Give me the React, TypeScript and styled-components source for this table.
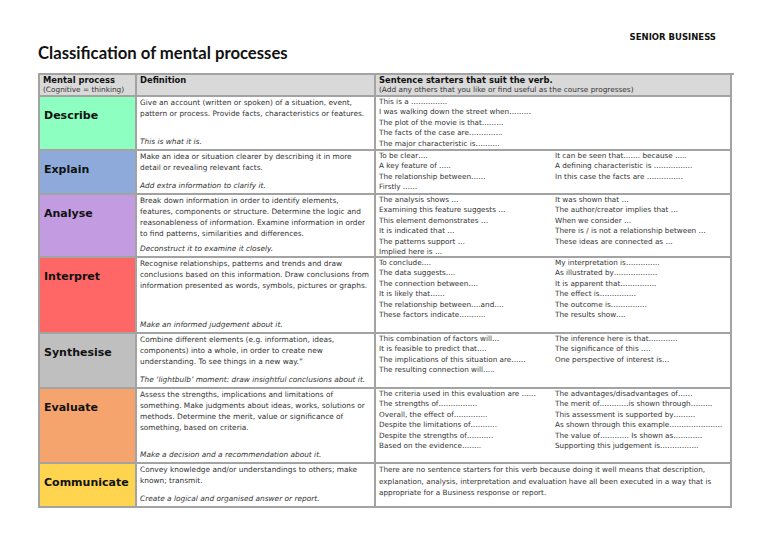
import React from "react";
import styled, { createGlobalStyle } from "styled-components";

const Global = createGlobalStyle`
  html, body { margin: 0; padding: 0; background: #ffffff; }
  body { font-family: "DejaVu Sans", Verdana, sans-serif; color: #333333; }
`;

const Page = styled.div`
  width: 768px;
  height: 543px;
  box-sizing: border-box;
  padding: 32px 0 0 38px;
  overflow: hidden;
`;

const Brand = styled.div`
  font-weight: 700;
  font-size: 8.5px;
  line-height: 10px;
  color: #111111;
  text-align: right;
  padding-right: 52px;
`;

const Title = styled.h1`
  margin: 1px 0 0 0;
  font-family: Lato, "Open Sans", sans-serif;
  font-weight: 700;
  font-size: 16.7px;
  line-height: 20px;
  color: #111111;
`;

const Table = styled.div`
  margin-top: 10px;
  width: 694px;
  border-top: 2px solid #a3a3a3;
  border-left: 2px solid #a3a3a3;
`;

const Row = styled.div<{ $h: number }>`
  display: grid;
  grid-template-columns: 97px 239px 356px;
  height: ${(p) => p.$h}px;
`;

const Cell = styled.div`
  box-sizing: border-box;
  border-right: 2px solid #a3a3a3;
  border-bottom: 2px solid #a3a3a3;
  overflow: hidden;
`;

const HeadCell = styled(Cell)`
  background: #d9d9d9;
  padding: 0 3px;
`;

const HeadTitle = styled.div`
  font-weight: 700;
  font-size: 8.4px;
  line-height: 10px;
  color: #111111;
  white-space: nowrap;
`;

const HeadSub = styled.div`
  font-size: 7.35px;
  line-height: 10px;
  color: #333333;
  white-space: nowrap;
`;

const Label = styled(Cell)<{ $bg: string }>`
  background: ${(p) => p.$bg};
  padding: 12px 0 0 4px;
  font-weight: 700;
  font-size: 11px;
  line-height: 14px;
  color: #111111;
`;

const Def = styled(Cell)`
  display: flex;
  flex-direction: column;
  justify-content: space-between;
  padding: 0 2px 2px 3px;
  font-size: 7.4px;
  line-height: 11px;
`;

const DefLine = styled.div`
  white-space: nowrap;
`;

const DefNote = styled.div`
  font-style: italic;
  white-space: nowrap;
`;

const Starters = styled(Cell)<{ $cols: number }>`
  display: grid;
  grid-template-columns: ${(p) => (p.$cols === 2 ? "176px 1fr" : "1fr")};
  align-content: start;
  padding: 0 3px;
  font-size: 7.25px;
  line-height: 10.4px;
`;

const Column = styled.div``;

const Line = styled.div`
  white-space: nowrap;
`;

const Para = styled.div`
  line-height: 11.5px;
`;

type Item = {
  name: string;
  color: string;
  h: number;
  def: string[];
  note: string;
  left?: string[];
  right?: string[];
  para?: string[];
};

const rows: Item[] = [
  {
    name: "Describe",
    color: "#8dffc0",
    h: 54,
    def: [
      "Give an account (written or spoken) of a situation, event,",
      "pattern or process. Provide facts, characteristics or features.",
    ],
    note: "This is what it is.",
    left: [
      "This is a ……………",
      "I was walking down the street when………",
      "The plot of the movie is that………",
      "The facts of the case are…………..",
      "The major characteristic is……….",
    ],
  },
  {
    name: "Explain",
    color: "#8eaadb",
    h: 44,
    def: [
      "Make an idea or situation clearer by describing it in more",
      "detail or revealing relevant facts.",
    ],
    note: "Add extra information to clarify it.",
    left: ["To be clear….", "A key feature of …..", "The relationship between……", "Firstly ……"],
    right: [
      "It can be seen that……. because …..",
      "A defining characteristic is …………….",
      "In this case the facts are ……………",
    ],
  },
  {
    name: "Analyse",
    color: "#c39be0",
    h: 63,
    def: [
      "Break down information in order to identify elements,",
      "features, components or structure. Determine the logic and",
      "reasonableness of information. Examine information in order",
      "to find patterns, similarities and differences.",
    ],
    note: "Deconstruct it to examine it closely.",
    left: [
      "The analysis shows …",
      "Examining this feature suggests …",
      "This element demonstrates …",
      "It is indicated that …",
      "The patterns support …",
      "Implied here is …",
    ],
    right: [
      "It was shown that …",
      "The author/creator implies that …",
      "When we consider …",
      "There is / is not a relationship between …",
      "These ideas are connected as …",
    ],
  },
  {
    name: "Interpret",
    color: "#ff6666",
    h: 76,
    def: [
      "Recognise relationships, patterns and trends and draw",
      "conclusions based on this information. Draw conclusions from",
      "information presented as words, symbols, pictures or graphs.",
    ],
    note: "Make an informed judgement about it.",
    left: [
      "To conclude….",
      "The data suggests….",
      "The connection between….",
      "It is likely that……",
      "The relationship between….and….",
      "These factors indicate………..",
    ],
    right: [
      "My interpretation is…………..",
      "As illustrated by………………",
      "It is apparent that……………",
      "The effect is……………",
      "The outcome is……………",
      "The results show….",
    ],
  },
  {
    name: "Synthesise",
    color: "#bfbfbf",
    h: 55,
    def: [
      "Combine different elements (e.g. information, ideas,",
      "components) into a whole, in order to create new",
      "understanding. To see things in a new way.”",
    ],
    note: "The ‘lightbulb’ moment: draw insightful conclusions about it.",
    left: [
      "This combination of factors will…",
      "It is feasible to predict that….",
      "The implications of this situation are……",
      "The resulting connection will…..",
    ],
    right: [
      "The inference here is that…………",
      "The significance of this ….",
      "One perspective of interest is…",
    ],
  },
  {
    name: "Evaluate",
    color: "#f4a46c",
    h: 75,
    def: [
      "Assess the strengths, implications and limitations of",
      "something. Make judgments about ideas, works, solutions or",
      "methods. Determine the merit, value or significance of",
      "something, based on criteria.",
    ],
    note: "Make a decision and a recommendation about it.",
    left: [
      "The criteria used in this evaluation are ……",
      "The strengths of…………….",
      "Overall, the effect of…………..",
      "Despite the limitations of………..",
      "Despite the strengths of………..",
      "Based on the evidence……..",
    ],
    right: [
      "The advantages/disadvantages of……",
      "The merit of…………is shown through………",
      "This assessment is supported by………",
      "As shown through this example………………….",
      "The value of………… Is shown as…………",
      "Supporting this judgement is…………….",
    ],
  },
  {
    name: "Communicate",
    color: "#ffd54f",
    h: 44,
    def: ["Convey knowledge and/or understandings to others; make", "known; transmit."],
    note: "Create a logical and organised answer or report.",
    para: [
      "There are no sentence starters for this verb because doing it well means that description,",
      "explanation, analysis, interpretation and evaluation have all been executed in a way that is",
      "appropriate for a Business response or report.",
    ],
  },
];

export default function App() {
  return (
    <Page>
      <Global />
      <Brand>SENIOR BUSINESS</Brand>
      <Title>Classification of mental processes</Title>
      <Table>
        <Row $h={22}>
          <HeadCell>
            <HeadTitle>Mental process</HeadTitle>
            <HeadSub>(Cognitive = thinking)</HeadSub>
          </HeadCell>
          <HeadCell>
            <HeadTitle>Definition</HeadTitle>
          </HeadCell>
          <HeadCell>
            <HeadTitle>Sentence starters that suit the verb.</HeadTitle>
            <HeadSub>(Add any others that you like or find useful as the course progresses)</HeadSub>
          </HeadCell>
        </Row>
        {rows.map((r) => (
          <Row key={r.name} $h={r.h}>
            <Label $bg={r.color}>{r.name}</Label>
            <Def>
              <div>
                {r.def.map((d) => (
                  <DefLine key={d}>{d}</DefLine>
                ))}
              </div>
              <DefNote>{r.note}</DefNote>
            </Def>
            <Starters $cols={r.right ? 2 : 1}>
              {r.para ? (
                <Para>
                  {r.para.map((p) => (
                    <Line key={p}>{p}</Line>
                  ))}
                </Para>
              ) : (
                <>
                  <Column>
                    {r.left!.map((l) => (
                      <Line key={l}>{l}</Line>
                    ))}
                  </Column>
                  {r.right && (
                    <Column>
                      {r.right.map((l) => (
                        <Line key={l}>{l}</Line>
                      ))}
                    </Column>
                  )}
                </>
              )}
            </Starters>
          </Row>
        ))}
      </Table>
    </Page>
  );
}
